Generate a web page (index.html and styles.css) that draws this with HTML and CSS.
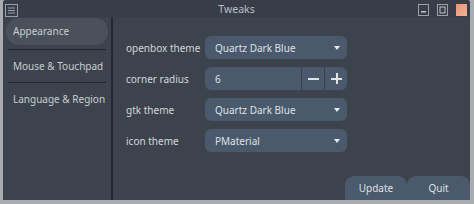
FILE: index.html
```html
<!DOCTYPE html>
<html>
<head>
<meta charset="utf-8">
<link rel="stylesheet" href="styles.css">
</head>
<body>
<div class="window">
  <div class="titlebar">
    <div class="tb-left">
      <svg width="13" height="13" viewBox="0 0 13 13"><rect x="0.5" y="0.5" width="12" height="12" fill="none" stroke="#9aa0a8"/><rect x="3" y="3.5" width="7" height="1" fill="#9aa0a8"/><rect x="3" y="6" width="7" height="1" fill="#9aa0a8"/><rect x="3" y="8.5" width="7" height="1" fill="#9aa0a8"/></svg>
    </div>
    <div class="title">Tweaks</div>
    <div class="tb-right">
      <svg width="11" height="12" viewBox="0 0 11 12"><rect x="0.5" y="0.5" width="10" height="11" fill="none" stroke="#9aa0a8"/><rect x="3" y="7" width="5" height="1.5" fill="#c0c4ca"/></svg>
      <svg width="11" height="12" viewBox="0 0 11 12"><rect x="0.5" y="0.5" width="10" height="11" fill="none" stroke="#9aa0a8"/><rect x="3" y="3" width="5" height="6" fill="none" stroke="#c0c4ca"/></svg>
      <span class="close"></span>
    </div>
  </div>
  <div class="body">
    <div class="sidebar">
      <div class="nav active">Appearance</div>
      <div class="sep"></div>
      <div class="nav">Mouse &amp; Touchpad</div>
      <div class="sep"></div>
      <div class="nav">Language &amp; Region</div>
    </div>
    <div class="main">
      <div class="form">
        <div class="label">openbox theme</div>
        <div class="combo"><span>Quartz Dark Blue</span><span class="arrow"></span></div>
        <div class="label">corner radius</div>
        <div class="spin"><span class="entry">6</span><span class="sbtn minus"></span><span class="sbtn plus"></span></div>
        <div class="label">gtk theme</div>
        <div class="combo"><span>Quartz Dark Blue</span><span class="arrow"></span></div>
        <div class="label">icon theme</div>
        <div class="combo"><span>PMaterial</span><span class="arrow"></span></div>
      </div>
      <div class="actions">
        <button class="btn">Update</button>
        <button class="btn">Quit</button>
      </div>
    </div>
  </div>
</div>
</body>
</html>
```
FILE: styles.css
```css
* { box-sizing: border-box; }
html, body { margin: 0; padding: 0; }
body {
  width: 474px;
  height: 204px;
  background: #a9adb2;
  font-family: "Noto Sans", "DejaVu Sans", sans-serif;
  font-size: 10px;
  color: #d6dae0;
  padding: 0 4px 4px 3px;
  overflow: hidden;
  white-space: nowrap;
}
.window {
  height: 200px;
  background: #3c434d;
  border-radius: 3px 3px 0 0;
  display: flex;
  flex-direction: column;
  overflow: hidden;
}
.titlebar {
  height: 17px;
  flex: none;
  background: #383e48;
  display: flex;
  align-items: center;
  position: relative;
  padding: 0 3px 0 2px;
}
.tb-left { display: flex; align-items: center; padding-top: 3px; }
.title {
  position: absolute;
  left: 0; right: 0;
  text-align: center;
  color: #b8bdc4;
  font-size: 10.5px;
  top: 2px;
}
.tb-right {
  margin-left: auto;
  display: flex;
  align-items: center;
  gap: 8px;
  padding-top: 3px;
}
.close {
  display: block;
  width: 11px;
  height: 12px;
  background: linear-gradient(135deg, #e8967a, #f2b392);
}
.body {
  flex: 1;
  display: flex;
}
.sidebar {
  width: 110px;
  flex: none;
  border-right: 2px solid #242830;
  padding: 0 3px;
}
.nav {
  height: 27px;
  line-height: 27px;
  padding-left: 7px;
  color: #c8cdd3;
  margin-top: 1px;
  border-radius: 13px;
}
.nav.active { background: #4a515b; }
.sep {
  height: 1px;
  background: #23272e;
  margin: 4px 2px 4px 2px;
}
.sep + .nav { height: 24px; line-height: 24px; margin-top: 3px; }
.sep + .nav + .sep { margin-top: 4px; }
.main {
  flex: 1;
  display: flex;
  flex-direction: column;
  padding-left: 13px;
}
.form {
  margin-top: 19px;
  display: grid;
  grid-template-columns: 79px 142px;
  grid-auto-rows: 23px;
  row-gap: 8px;
  align-items: center;
}
.label { color: #d2d6dc; }
.combo, .spin {
  height: 23px;
  background: #4a596b;
  border-radius: 6px;
  display: flex;
  align-items: center;
  color: #dde1e6;
}
.combo { padding: 0 7px 0 10px; }
.arrow {
  margin-left: auto;
  width: 0; height: 0;
  border-left: 3.5px solid transparent;
  border-right: 3.5px solid transparent;
  border-top: 4px solid #e6e9ed;
}
.spin { overflow: hidden; }
.entry { flex: 1; padding-left: 10px; }
.sbtn {
  width: 23px;
  height: 23px;
  border-left: 1px solid #38424f;
  position: relative;
}
.sbtn::before, .plus::after {
  content: "";
  position: absolute;
  background: #dfe3e8;
  left: 6px; top: 11px;
  width: 11px; height: 1.5px;
}
.plus::after {
  left: 11px; top: 6px;
  width: 1.5px; height: 11px;
}
.actions {
  margin-top: auto;
  display: flex;
  justify-content: flex-end;
}
.btn {
  font: inherit;
  color: #dde1e6;
  background: #4a596b;
  border: none;
  border-radius: 9px 9px 0 0;
  height: 24px;
  padding: 0;
}
.btn:first-child { width: 62px; }
.btn:last-child { width: 63px; }
```
